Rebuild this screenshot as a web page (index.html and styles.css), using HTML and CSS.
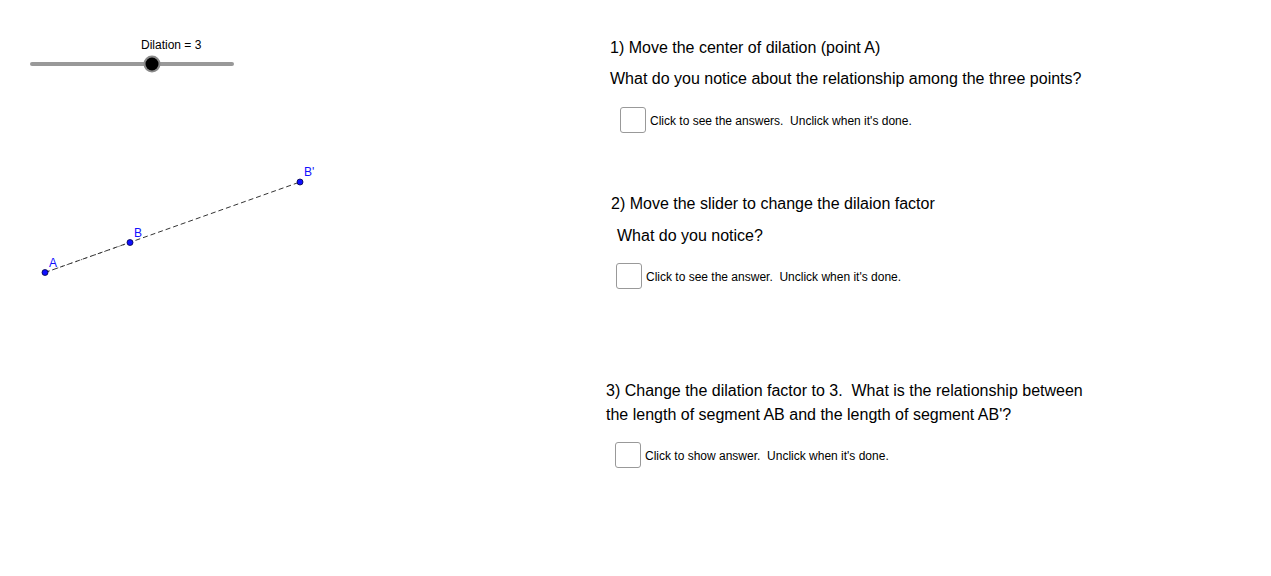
FILE: index.html
```html
<!DOCTYPE html>
<html>
<head>
<meta charset="utf-8">
<link rel="stylesheet" href="styles.css">
</head>
<body>
<div class="canvas">
  <svg class="geo" width="1271" height="576" viewBox="0 0 1271 576">
    <line x1="32" y1="64" x2="232" y2="64" stroke="#999" stroke-width="4" stroke-linecap="round"/>
    <circle cx="152" cy="64" r="8.5" fill="#8a8a8a"/>
    <circle cx="152" cy="64" r="6.5" fill="#000"/>
    <line x1="45" y1="272.5" x2="300" y2="182" stroke="#333" stroke-width="1" stroke-dasharray="5,3"/>
    <line x1="45" y1="272.5" x2="130" y2="242.5" stroke="#333" stroke-width="1" stroke-dasharray="1,4" stroke-dashoffset="2"/>
    <circle cx="45" cy="272.5" r="3" fill="#1010ff" stroke="#000044" stroke-width="0.8"/>
    <circle cx="130" cy="242.5" r="3" fill="#1010ff" stroke="#000044" stroke-width="0.8"/>
    <circle cx="300" cy="182" r="3" fill="#1010ff" stroke="#000044" stroke-width="0.8"/>
  </svg>
  <div class="lbl slider-lbl">Dilation = 3</div>
  <div class="pt pt-a">A</div>
  <div class="pt pt-b">B</div>
  <div class="pt pt-bp">B'</div>

  <div class="txt t1">1) Move the center of dilation (point A)</div>
  <div class="txt t2">What do you notice about the relationship among the three points?</div>
  <label class="chk c1"><span class="box"></span><span class="small">Click to see the answers.&nbsp; Unclick when it's done.</span></label>

  <div class="txt t3">2) Move the slider to change the dilaion factor</div>
  <div class="txt t4">What do you notice?</div>
  <label class="chk c2"><span class="box"></span><span class="small">Click to see the answer.&nbsp; Unclick when it's done.</span></label>

  <div class="txt t5">3) Change the dilation factor to 3.&nbsp; What is the relationship between<br>the length of segment AB and the length of segment AB'?</div>
  <label class="chk c3"><span class="box"></span><span class="small">Click to show answer.&nbsp; Unclick when it's done.</span></label>
</div>
</body>
</html>
```
FILE: styles.css
```css
html, body {
  margin: 0;
  padding: 0;
  background: #fff;
}
body {
  font-family: "Liberation Sans", Arial, sans-serif;
  color: #000;
}
.canvas {
  position: relative;
  width: 1271px;
  height: 576px;
  overflow: hidden;
}
.geo {
  position: absolute;
  left: 0;
  top: 0;
}
.lbl, .pt, .txt, .chk {
  position: absolute;
  white-space: nowrap;
}
.slider-lbl {
  left: 141px;
  top: 38px;
  font-size: 12px;
  line-height: 14px;
}
.pt {
  color: #1010ff;
  font-size: 12px;
  line-height: 14px;
}
.pt-a { left: 49px; top: 256px; }
.pt-b { left: 134px; top: 226px; }
.pt-bp { left: 304px; top: 165px; }

.txt {
  font-size: 16px;
  line-height: 24px;
}
.t1 { left: 610px; top: 36px; }
.t2 { left: 610px; top: 67px; }
.t3 { left: 611px; top: 192px; }
.t4 { left: 617px; top: 224px; }
.t5 { left: 606px; top: 379px; }

.chk {
  display: flex;
  align-items: center;
  gap: 4px;
}
.box {
  width: 24px;
  height: 24px;
  border: 1px solid #999;
  border-radius: 3px;
  background: #fff;
  display: block;
}
.small {
  font-size: 12px;
  line-height: 14px;
  padding-top: 2px;
}
.c1 { left: 620px; top: 107px; }
.c2 { left: 616px; top: 263px; }
.c3 { left: 615px; top: 442px; }
```
